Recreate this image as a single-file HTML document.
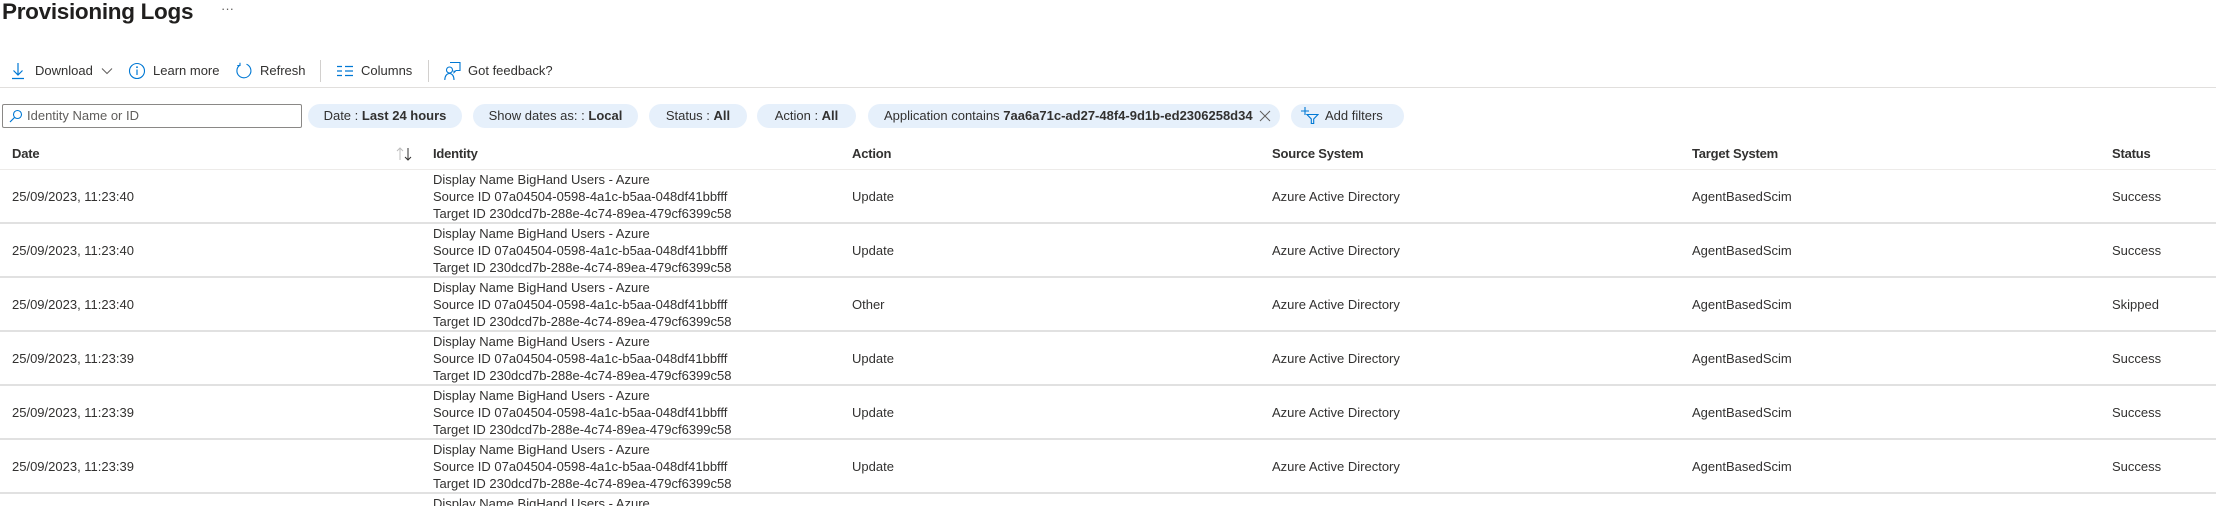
<!DOCTYPE html>
<html style="width:2216px;height:506px;overflow:hidden"><head><meta charset="utf-8"><style>
*{margin:0;padding:0;box-sizing:border-box}
body{width:2216px;height:506px;overflow:hidden;background:#fff;font-family:"Liberation Sans",sans-serif;color:#323130}
#w{position:relative;width:2216px;height:506px;overflow:hidden}
.a{position:absolute;white-space:nowrap}
.t{font-size:13px;line-height:17px}
.hl{position:absolute;left:0;width:2216px;height:1px;background:#e1dfdd}
.rl{position:absolute;left:0;width:2216px;height:2px;background:#e1e1e1}
.pill{position:absolute;top:104px;height:24px;border-radius:12px;background:#e6f0fb;font-size:13px;line-height:24px;text-align:center;white-space:nowrap}
.pill b{font-weight:bold}
.tb{position:absolute;top:63px;font-size:13px;line-height:16px;white-space:nowrap}
.hd{position:absolute;top:145px;font-size:13px;line-height:17px;font-weight:bold;color:#323130;letter-spacing:-0.2px}
</style></head><body><div id="w">
<div class="a" style="left:2px;top:-2px;font-size:22.5px;line-height:28px;font-weight:bold;color:#201f1e;letter-spacing:-0.3px">Provisioning Logs</div>
<div class="a" style="left:221px;top:1px;font-size:13px;color:#605e5c">···</div>

<svg class="a" style="left:11px;top:62px" width="14" height="18" viewBox="0 0 14 18"><path d="M7 1v12M2.5 8.5L7 13l4.5-4.5M1 16.5h12" stroke="#0078d4" stroke-width="1.2" fill="none"/></svg>
<div class="tb" style="left:35px">Download</div>
<svg class="a" style="left:101px;top:67px" width="12" height="8" viewBox="0 0 12 8"><path d="M1 1.5l5 5 5-5" stroke="#605e5c" stroke-width="1" fill="none"/></svg>
<svg class="a" style="left:128px;top:62px" width="18" height="18" viewBox="0 0 18 18"><circle cx="9" cy="9" r="7.5" stroke="#0078d4" stroke-width="1.1" fill="none"/><path d="M9 7.5v5.5" stroke="#0078d4" stroke-width="1.2"/><circle cx="9" cy="5.2" r="0.9" fill="#0078d4"/></svg>
<div class="tb" style="left:153px">Learn more</div>
<svg class="a" style="left:235px;top:62px" width="18" height="18" viewBox="0 0 18 18"><path d="M11.5 2.3A7 7 0 1 1 5 3" stroke="#0078d4" stroke-width="1.1" fill="none"/><path d="M5 0.8V3.5H2.3" stroke="#0078d4" stroke-width="1.1" fill="none"/></svg>
<div class="tb" style="left:260px">Refresh</div>
<div class="a" style="left:320px;top:60px;width:1px;height:22px;background:#d2d0ce"></div>
<svg class="a" style="left:337px;top:64px" width="16" height="14" viewBox="0 0 16 14"><path d="M0 2.5h5M0 7h5M0 11.5h5M8 2.5h8M8 7h8M8 11.5h8" stroke="#0078d4" stroke-width="1.2"/></svg>
<div class="tb" style="left:361px">Columns</div>
<div class="a" style="left:428px;top:60px;width:1px;height:22px;background:#d2d0ce"></div>
<svg class="a" style="left:444px;top:61px" width="17" height="20" viewBox="0 0 17 20"><path d="M6 1.5h10v8h-4l-2 2v-2" stroke="#0078d4" stroke-width="1.1" fill="none"/><circle cx="5.5" cy="9" r="3" stroke="#0078d4" stroke-width="1.1" fill="none"/><path d="M0.8 19c0-4 2-6.5 4.7-6.5S10 15 10 19" stroke="#0078d4" stroke-width="1.1" fill="none"/></svg>
<div class="tb" style="left:468px">Got feedback?</div>
<div class="hl" style="top:87px"></div>

<div class="a" style="left:2px;top:104px;width:300px;height:24px;border:1px solid #8a8886;border-radius:2px"></div>
<svg class="a" style="left:9px;top:109px" width="14" height="14" viewBox="0 0 14 14"><circle cx="8.5" cy="5.5" r="4" stroke="#0078d4" stroke-width="1.1" fill="none"/><path d="M5.5 8.5L1 13" stroke="#0078d4" stroke-width="1.2"/></svg>
<div class="a" style="left:27px;top:108px;font-size:13px;line-height:16px;color:#605e5c">Identity Name or ID</div>

<div class="pill" style="left:308px;width:154px">Date : <b>Last 24 hours</b></div>
<div class="pill" style="left:473px;width:165px">Show dates as: : <b>Local</b></div>
<div class="pill" style="left:649px;width:98px">Status : <b>All</b></div>
<div class="pill" style="left:757px;width:99px">Action : <b>All</b></div>
<div class="pill" style="left:868px;width:412px;text-align:left;padding-left:16px">Application contains <b>7aa6a71c-ad27-48f4-9d1b-ed2306258d34</b></div>
<svg class="a" style="left:1259px;top:110px" width="12" height="12" viewBox="0 0 12 12"><path d="M1 1l10 10M11 1L1 11" stroke="#605e5c" stroke-width="1"/></svg>
<div class="pill" style="left:1291px;width:113px;text-align:left;padding-left:34px">Add filters</div>
<svg class="a" style="left:1301px;top:106px" width="18" height="18" viewBox="0 0 18 18"><path d="M4 1v8M0 5h8" stroke="#0078d4" stroke-width="1.1"/><path d="M6 8.5h11l-4.3 4.5v4.5h-2.4V13z" stroke="#0078d4" stroke-width="1.1" fill="none"/></svg>

<div class="hd" style="left:12px">Date</div>
<svg class="a" style="left:396px;top:146px" width="18" height="16" viewBox="0 0 18 16"><path d="M4 14V2M1 5l3-3 3 3" stroke="#bdbdbd" stroke-width="1" fill="none"/><path d="M12 2v12M9 11l3 3 3-3" stroke="#323130" stroke-width="1" fill="none"/></svg>
<div class="hd" style="left:433px">Identity</div>
<div class="hd" style="left:852px">Action</div>
<div class="hd" style="left:1272px">Source System</div>
<div class="hd" style="left:1692px">Target System</div>
<div class="hd" style="left:2112px">Status</div>
<div class="hl" style="top:169px;background:#edebe9"></div>

<div id="rows"></div>
<div class="a t" style="left:433px;top:495px;height:11px;overflow:hidden">Display Name BigHand Users - Azure</div>
<script>
(function(){
var d=[["25/09/2023, 11:23:40","Update","Success"],["25/09/2023, 11:23:40","Update","Success"],["25/09/2023, 11:23:40","Other","Skipped"],["25/09/2023, 11:23:39","Update","Success"],["25/09/2023, 11:23:39","Update","Success"],["25/09/2023, 11:23:39","Update","Success"]];
var h="";
for(var i=0;i<d.length;i++){var rt=169+i*54;var c=rt+27;
h+='<div class="a t" style="left:12px;top:'+(c-8)+'px">'+d[i][0]+'</div>';
h+='<div class="a t" style="left:433px;top:'+(c-25)+'px">Display Name BigHand Users - Azure<br>Source ID 07a04504-0598-4a1c-b5aa-048df41bbfff<br>Target ID 230dcd7b-288e-4c74-89ea-479cf6399c58</div>';
h+='<div class="a t" style="left:852px;top:'+(c-8)+'px">'+d[i][1]+'</div>';
h+='<div class="a t" style="left:1272px;top:'+(c-8)+'px">Azure Active Directory</div>';
h+='<div class="a t" style="left:1692px;top:'+(c-8)+'px">AgentBasedScim</div>';
h+='<div class="a t" style="left:2112px;top:'+(c-8)+'px">'+d[i][2]+'</div>';
h+='<div class="rl" style="top:'+(rt+53)+'px"></div>';}
document.getElementById("rows").innerHTML=h;
})();
</script>
</div></body></html>
